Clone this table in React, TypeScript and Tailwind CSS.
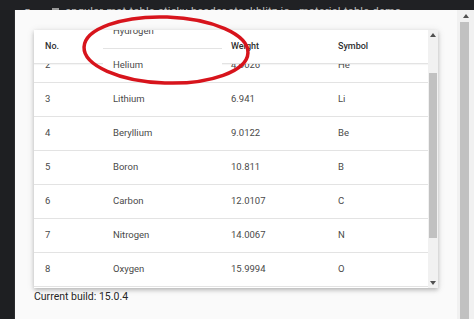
import React from "react";

type Element = { no: number; name: string; weight: string; symbol: string };

const elements: Element[] = [
  { no: 1, name: "Hydrogen", weight: "1.0079", symbol: "H" },
  { no: 2, name: "Helium", weight: "4.0026", symbol: "He" },
  { no: 3, name: "Lithium", weight: "6.941", symbol: "Li" },
  { no: 4, name: "Beryllium", weight: "9.0122", symbol: "Be" },
  { no: 5, name: "Boron", weight: "10.811", symbol: "B" },
  { no: 6, name: "Carbon", weight: "12.0107", symbol: "C" },
  { no: 7, name: "Nitrogen", weight: "14.0067", symbol: "N" },
  { no: 8, name: "Oxygen", weight: "15.9994", symbol: "O" },
];

const cell = "h-[34px] flex items-center border-b border-[#e3e3e3] shrink-0";

function Arrow({ up }: { up?: boolean }) {
  return (
    <svg width="6" height="4" viewBox="0 0 6 4" className="block">
      {up ? <path d="M0 4 L3 0 L6 4 Z" fill="#505050" /> : <path d="M0 0 L3 4 L6 0 Z" fill="#505050" />}
    </svg>
  );
}

export default function App() {
  return (
    <div
      className="relative w-[474px] h-[319px] bg-[#202124] flex flex-col overflow-hidden"
      style={{ fontFamily: "Roboto, 'Liberation Sans', sans-serif" }}
    >
      {/* browser chrome strip */}
      <div className="h-[10px] relative overflow-hidden flex items-end shrink-0">
        <div className="flex items-center gap-[6px] pl-[24px] -mb-[7px] text-[11px] leading-[11px] text-[#bdbdbd]">
          <span className="mr-[16px]">g</span>
          <span className="w-[7px] h-[7px] bg-[#9a9a9a] inline-block" />
          <span className="tracking-[0.2px]">angular-mat-table-sticky-header.stackblitz.io - material-table-demo</span>
        </div>
      </div>

      <div className="flex-1 flex min-h-0">
        <div className="w-[15px] bg-[#1e1f22] border-r border-[#2a2b2e] shrink-0" />

        {/* page */}
        <div className="flex-1 bg-[#fafafa] px-[19px] pt-[20px] relative">
          <div className="h-[258px] bg-white flex shadow-[0_2px_4px_rgba(0,0,0,0.22),0_1px_8px_rgba(0,0,0,0.1)]">
            <div className="flex-1 relative overflow-hidden">
              {/* sticky header */}
              <div className="absolute top-0 left-0 right-0 h-[34px] bg-white z-10 flex items-center border-b border-[#e3e3e3] shadow-[0_1px_1px_rgba(0,0,0,0.04)] text-[9px] font-medium text-[#2f2f2f]">
                <div className="w-[69px] pl-[11px]">No.</div>
                <div className="w-[119px] pl-[10px]">Name</div>
                <div className="w-[106px] pl-[9px]">Weight</div>
                <div className="flex-1 pl-[10px]">Symbol</div>
              </div>

              {/* rows, scrolled */}
              <div className="-mt-[15px] flex flex-col text-[9.5px] text-[#4a4a4a]">
                {elements.map((e) => (
                  <div key={e.no} className="flex">
                    <div className={`${cell} w-[69px] pl-[11px]`}>{e.no}</div>
                    <div className={`${cell} w-[119px] pl-[10px] bg-white relative z-20`}>{e.name}</div>
                    <div className={`${cell} w-[106px] pl-[9px]`}>{e.weight}</div>
                    <div className={`${cell} flex-1 pl-[10px]`}>{e.symbol}</div>
                  </div>
                ))}
              </div>
            </div>

            {/* inner scrollbar */}
            <div className="w-[10px] bg-[#f1f1f1] flex flex-col items-center shrink-0">
              <div className="h-[10px] flex items-center justify-center"><Arrow up /></div>
              <div className="h-[33px]" />
              <div className="w-[8px] h-[165px] bg-[#c1c1c1]" />
              <div className="flex-1" />
              <div className="h-[10px] flex items-center justify-center"><Arrow /></div>
            </div>
          </div>

          <div className="mt-[2px] text-[10.5px] leading-[14px] text-[#262626]">Current build: 15.0.4</div>
        </div>

        {/* page scrollbar */}
        <div className="w-[17px] bg-[#f1f1f1] flex flex-col items-center shrink-0">
          <div className="h-[12px] flex items-center justify-center"><Arrow up /></div>
          <div className="w-[9px] flex-1 bg-[#c1c1c1] -ml-[2px]" />
        </div>
      </div>

      {/* red marker ring */}
      <svg
        className="absolute left-[80px] top-[13px] z-50 pointer-events-none"
        width="174"
        height="76"
        viewBox="80 13 174 76"
      >
        <ellipse cx="166" cy="50" rx="82" ry="33" fill="none" stroke="#d7141c" strokeWidth="3.5" transform="rotate(2 166 50)" />
      </svg>
    </div>
  );
}
